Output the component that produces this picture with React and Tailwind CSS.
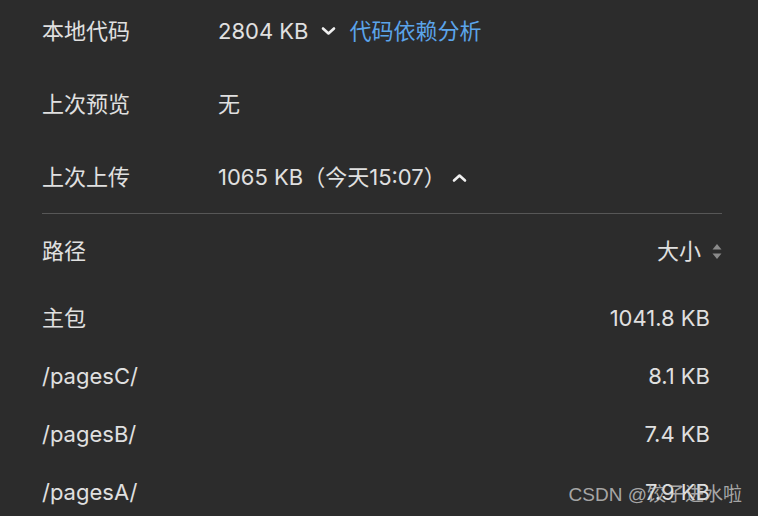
import React from "react";

const font = { fontFamily: '"Inter", "Noto Sans CJK SC", sans-serif' };

function ChevronDown() {
  return (
    <svg width="15" height="10" viewBox="0 0 15 10" className="ml-[13px]">
      <path d="M2 2.5 L7.5 7.5 L13 2.5" fill="none" stroke="#f0f0f0" strokeWidth="2.6" strokeLinecap="round" strokeLinejoin="round" />
    </svg>
  );
}

function ChevronUp() {
  return (
    <svg width="15" height="10" viewBox="0 0 15 10" className="ml-[6px] mt-[2px]">
      <path d="M2 7.5 L7.5 2.5 L13 7.5" fill="none" stroke="#f0f0f0" strokeWidth="2.6" strokeLinecap="round" strokeLinejoin="round" />
    </svg>
  );
}

function SortIcon() {
  return (
    <svg width="10" height="17" viewBox="0 0 10 17" className="ml-[11px]">
      <path d="M5 1 L9.5 6.5 L0.5 6.5 Z" fill="#8a8a8a" />
      <path d="M5 16 L9.5 10.5 L0.5 10.5 Z" fill="#8a8a8a" />
    </svg>
  );
}

const files = [
  { path: "主包", size: "1041.8 KB" },
  { path: "/pagesC/", size: "8.1 KB" },
  { path: "/pagesB/", size: "7.4 KB" },
  { path: "/pagesA/", size: "7.9 KB" },
];

export default function App() {
  return (
    <div className="relative w-[758px] h-[516px] overflow-hidden bg-[#2c2c2c] text-[#e0e0e0] text-[22px]" style={font}>
      <div className="pl-[42px] pr-[36px] pt-[16px]">
        <div className="flex flex-col gap-[43px]">
          <div className="flex items-center h-[30px]">
            <div className="w-[176px]">本地代码</div>
            <div className="flex items-center">
              <span>2804 KB</span>
              <ChevronDown />
              <span className="ml-[13px] text-[#5ba4ea]">代码依赖分析</span>
            </div>
          </div>
          <div className="flex items-center h-[30px]">
            <div className="w-[176px]">上次预览</div>
            <div>无</div>
          </div>
          <div className="flex items-center h-[30px]">
            <div className="w-[176px]">上次上传</div>
            <div className="flex items-center">
              <span>1065 KB（今天15:07）</span>
              <ChevronUp />
            </div>
          </div>
        </div>

        <div className="mt-[21px] border-t border-[#575757]" />

        <div className="flex items-center justify-between h-[30px] mt-[22px]">
          <div>路径</div>
          <div className="flex items-center">
            <span>大小</span>
            <SortIcon />
          </div>
        </div>

        <div className="flex flex-col gap-[28px] mt-[37px]">
          {files.map((f) => (
            <div key={f.path} className="flex items-center justify-between h-[30px] pr-[12px]">
              <span>{f.path}</span>
              <span>{f.size}</span>
            </div>
          ))}
        </div>
      </div>

      <div className="absolute right-[16px] bottom-[7px] text-[19px] text-[#c8c8c8]/80" style={{ fontFamily: '"Liberation Sans", "Noto Sans CJK SC", sans-serif' }}>
        CSDN @饺子进水啦
      </div>
    </div>
  );
}
